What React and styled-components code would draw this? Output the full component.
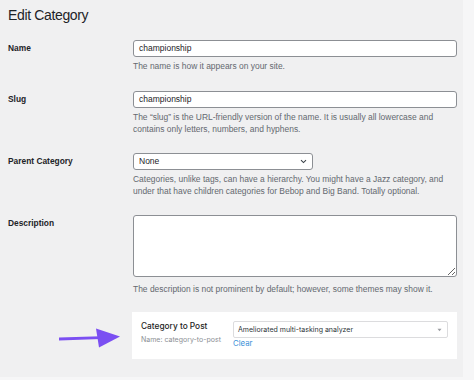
import React from "react";
import styled, { createGlobalStyle } from "styled-components";

const Global = createGlobalStyle`
  html, body { margin: 0; padding: 0; background: #f6f6f7; }
  * { box-sizing: border-box; }
`;

const Page = styled.div`
  width: 463px;
  height: 377px;
  background: #f0f0f1;
  padding: 4px 0 0 8px;
  font-family: "Liberation Sans", Arial, sans-serif;
  color: #1d2327;
`;

const Title = styled.h1`
  margin: 0;
  font-size: 14px;
  font-weight: 400;
  line-height: 22px;
  letter-spacing: -0.35px;
`;

const Row = styled.div`
  display: grid;
  grid-template-columns: 125px 324px;
  margin-top: ${(p) => p.$top}px;
`;

const Label = styled.div`
  font-size: 8.4px;
  font-weight: 700;
  line-height: 17px;
`;

const Field = styled.div`
  display: flex;
  flex-direction: column;
`;

const TextInput = styled.div`
  height: 17px;
  width: ${(p) => p.$w || 324}px;
  background: #fff;
  border: 1px solid #8c8f94;
  border-radius: 3px;
  padding: 0 5px;
  font-size: 8.5px;
  line-height: 15px;
  display: flex;
  align-items: center;
  justify-content: space-between;
`;

const TextArea = styled.textarea`
  display: block;
  width: 324px;
  height: 62px;
  margin: 0;
  background: #fff;
  border: 1px solid #8c8f94;
  border-radius: 3px;
  resize: vertical;
`;

const Help = styled.p`
  margin: ${(p) => p.$top || 3}px 0 0;
  font-size: 8.45px;
  line-height: 12px;
  color: #646970;
`;

const ArrowCell = styled.div`
  display: flex;
  align-items: center;
  justify-content: flex-end;
  padding: 4px 12px 0 0;
`;

const Card = styled.div`
  width: 325px;
  height: 47px;
  margin-left: -1px;
  background: #fff;
  padding: 9px 9px 0;
  display: flex;
  font-family: Inter, "Liberation Sans", sans-serif;
`;

const CardLabel = styled.div`
  width: 92px;
  display: flex;
  flex-direction: column;
`;

const CardTitle = styled.div`
  font-size: 8.3px;
  font-weight: 500;
  line-height: 10px;
  color: #1e1e1e;
`;

const CardSub = styled.div`
  margin-top: 4px;
  font-size: 7px;
  line-height: 10px;
  color: #8c8f94;
`;

const CardField = styled.div`
  flex: 1;
  display: flex;
  flex-direction: column;
`;

const CardSelect = styled.div`
  height: 17px;
  border: 1px solid #dcdcde;
  border-radius: 2px;
  padding: 0 5px 0 4px;
  display: flex;
  align-items: center;
  justify-content: space-between;
  font-size: 7px;
  color: #2c3338;
`;

const ClearLink = styled.a`
  font-size: 7.8px;
  line-height: 10px;
  color: #3a8fd8;
  text-decoration: none;
`;

const Chevron = () => (
  <svg width="7" height="5" viewBox="0 0 7 5">
    <path d="M1 1.2 L3.5 3.6 L6 1.2" fill="none" stroke="#3c434a" strokeWidth="1.1" />
  </svg>
);

const Caret = () => (
  <svg width="5" height="4" viewBox="0 0 5 4">
    <path d="M0.5 0.8 H4.5 L2.5 3.2 Z" fill="#9a9ca0" />
  </svg>
);

const Arrow = () => (
  <svg width="62" height="20" viewBox="0 0 62 20">
    <path d="M0 11 L42 9.6" stroke="#7b4ff2" strokeWidth="2.8" strokeLinecap="round" />
    <path d="M37 0.5 L61 8.5 L40 19.5 Z" fill="#7b4ff2" strokeLinejoin="round" />
  </svg>
);

export default function App() {
  return (
    <>
      <Global />
      <Page>
        <Title>Edit Category</Title>

        <Row $top={14}>
          <Label>Name</Label>
          <Field>
            <TextInput>championship</TextInput>
            <Help>The name is how it appears on your site.</Help>
          </Field>
        </Row>

        <Row $top={19}>
          <Label>Slug</Label>
          <Field>
            <TextInput>championship</TextInput>
            <Help>
              The “slug” is the URL-friendly version of the name. It is usually all lowercase and
              contains only letters, numbers, and hyphens.
            </Help>
          </Field>
        </Row>

        <Row $top={18}>
          <Label>Parent Category</Label>
          <Field>
            <TextInput $w={180}>
              <span>None</span>
              <Chevron />
            </TextInput>
            <Help>
              Categories, unlike tags, can have a hierarchy. You might have a Jazz category, and
              under that have children categories for Bebop and Big Band. Totally optional.
            </Help>
          </Field>
        </Row>

        <Row $top={18}>
          <Label>Description</Label>
          <Field>
            <TextArea />
            <Help $top={6}>
              The description is not prominent by default; however, some themes may show it.
            </Help>
          </Field>
        </Row>

        <Row $top={17}>
          <ArrowCell>
            <Arrow />
          </ArrowCell>
          <Card>
            <CardLabel>
              <CardTitle>Category to Post</CardTitle>
              <CardSub>Name: category-to-post</CardSub>
            </CardLabel>
            <CardField>
              <CardSelect>
                <span>Ameliorated multi-tasking analyzer</span>
                <Caret />
              </CardSelect>
              <ClearLink href="#">Clear</ClearLink>
            </CardField>
          </Card>
        </Row>
      </Page>
    </>
  );
}
